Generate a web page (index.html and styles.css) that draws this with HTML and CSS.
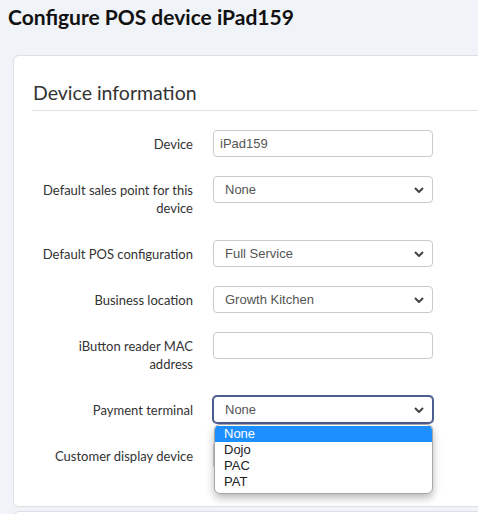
FILE: index.html
```html
<!DOCTYPE html>
<html>
<head>
<meta charset="utf-8">
<link rel="stylesheet" href="styles.css">
</head>
<body>
<div class="page">
  <h1 class="title">Configure POS device iPad159</h1>
  <div class="card">
    <h2 class="section-title">Device information</h2>
    <div class="form">
      <div class="row">
        <label class="label">Device</label>
        <div class="field"><input class="control input" type="text" value="iPad159"></div>
      </div>
      <div class="row">
        <label class="label">Default sales point for this device</label>
        <div class="field select-wrap">
          <div class="control select">None</div>
          <svg class="chev" width="10" height="6" viewBox="0 0 10 6"><path d="M1 1 L5 5 L9 1" fill="none" stroke="#444" stroke-width="2"/></svg>
        </div>
      </div>
      <div class="row">
        <label class="label">Default POS configuration</label>
        <div class="field select-wrap">
          <div class="control select">Full Service</div>
          <svg class="chev" width="10" height="6" viewBox="0 0 10 6"><path d="M1 1 L5 5 L9 1" fill="none" stroke="#444" stroke-width="2"/></svg>
        </div>
      </div>
      <div class="row">
        <label class="label">Business location</label>
        <div class="field select-wrap">
          <div class="control select">Growth Kitchen</div>
          <svg class="chev" width="10" height="6" viewBox="0 0 10 6"><path d="M1 1 L5 5 L9 1" fill="none" stroke="#444" stroke-width="2"/></svg>
        </div>
      </div>
      <div class="row">
        <label class="label">iButton reader MAC address</label>
        <div class="field"><input class="control input" type="text" value=""></div>
      </div>
      <div class="row">
        <label class="label">Payment terminal</label>
        <div class="field select-wrap">
          <div class="control select focused">None</div>
          <svg class="chev" width="10" height="6" viewBox="0 0 10 6"><path d="M1 1 L5 5 L9 1" fill="none" stroke="#444" stroke-width="2"/></svg>
          <ul class="dropdown">
            <li class="option selected">None</li>
            <li class="option">Dojo</li>
            <li class="option">PAC</li>
            <li class="option">PAT</li>
          </ul>
        </div>
      </div>
      <div class="row">
        <label class="label">Customer display device</label>
        <div class="field select-wrap">
          <div class="control select"></div>
        </div>
      </div>
    </div>
  </div>
  <div class="card next"></div>
</div>
</body>
</html>
```

FILE: styles.css
```css
html, body {
  margin: 0;
  padding: 0;
  overflow: hidden;
  background: #f0f3f7;
}
.page {
  width: 700px;
  font-family: Lato, "Liberation Sans", sans-serif;
  color: #333;
}
.title {
  margin: 0;
  padding: 5px 0 0 8px;
  font-size: 21px;
  line-height: 24px;
  font-weight: 700;
  color: #111;
  height: 55px;
  box-sizing: border-box;
}
.card {
  margin-left: 13px;
  background: #fff;
  border: 1px solid #dcdfe3;
  border-radius: 6px;
  padding: 20px 18px 18px 18px;
  box-sizing: border-box;
  width: 640px;
}
.card.next {
  margin-top: 4px;
  height: 40px;
}
.section-title {
  margin: 5px 0 0 0;
  padding: 0 0 5px 1px;
  font-size: 19.5px;
  line-height: 24px;
  font-weight: 400;
  color: #333;
  border-bottom: 1px solid #e3e3e3;
}
.form {
  margin-top: 19px;
}
.row {
  display: grid;
  grid-template-columns: 156px 220px;
  column-gap: 20px;
  padding-left: 5px;
  margin-bottom: 19px;
  align-items: start;
}
.label {
  text-align: right;
  font-size: 13px;
  line-height: 18px;
  padding: 5px 0 4px 0;
  color: #333;
}
.field {
  position: relative;
}
.control {
  display: block;
  box-sizing: border-box;
  width: 220px;
  height: 27px;
  border: 1px solid #cacaca;
  border-radius: 4px;
  background: #fff;
  font-family: "Liberation Sans", Arial, sans-serif;
  font-size: 13px;
  color: #555;
  margin: 0;
}
.input {
  padding: 0 6px;
  outline: none;
}
.select {
  padding: 0 11px;
  line-height: 25px;
}
.select.focused {
  border-color: #4b5d8f;
  box-shadow: 0 0 0 1px #4b5d8f;
}
.chev {
  position: absolute;
  right: 9px;
  top: 11px;
}
.dropdown {
  position: absolute;
  top: 28px;
  left: 1px;
  width: 219px;
  margin: 0;
  padding: 1px 0 3px 0;
  list-style: none;
  box-sizing: border-box;
  background: #fff;
  border: 1px solid #a7a7a7;
  border-radius: 6px;
  box-shadow: 0 4px 9px rgba(0, 0, 0, 0.28);
  font-family: "Liberation Sans", Arial, sans-serif;
  font-size: 13px;
  color: #222;
  z-index: 5;
  overflow: hidden;
}
.option {
  height: 16px;
  line-height: 16px;
  padding-left: 9px;
}
.option.selected {
  background: #1e8fff;
  color: #fff;
}
```
